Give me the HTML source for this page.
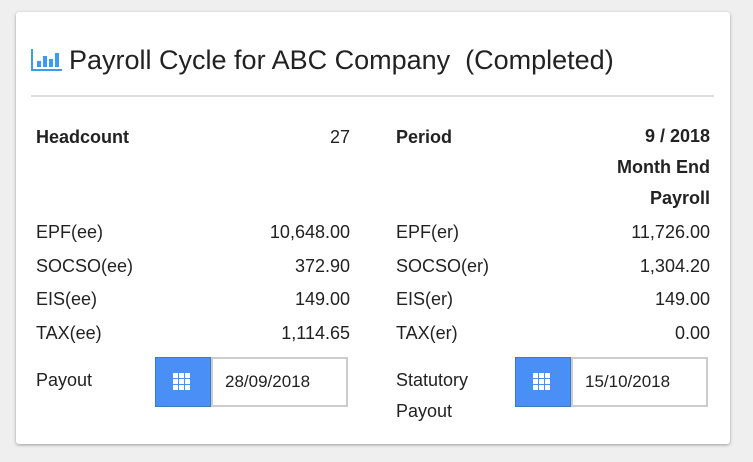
<!DOCTYPE html><html><head><style>
body{margin:0;width:753px;height:462px;background:#efefef;font-family:"Liberation Sans",Arial,sans-serif;color:#222;position:relative;overflow:hidden}
.card{position:absolute;left:16px;top:12px;width:714px;height:432px;background:#fff;border-radius:3px;box-shadow:0 1px 3px rgba(0,0,0,.35)}
.t{position:absolute;white-space:nowrap;font-size:18px;line-height:20px}
.r{text-align:right}
.b{font-weight:bold}
.btn{position:absolute;width:54px;height:48px;background:#4a8ff5;border:1px solid #3a7cc0}
.inp{position:absolute;width:121px;height:46px;border:2px solid #ccc;font-size:17px;line-height:46px;padding-left:12px;box-sizing:content-box}
</style></head><body>
<div class="card"></div>
<svg style="position:absolute;left:31px;top:49px" width="31" height="23"><g fill="#3a9bf0"><rect x="0" y="0" width="2" height="22"/><rect x="0" y="20" width="31" height="2"/><rect x="6" y="12" width="4" height="6"/><rect x="12" y="7" width="4" height="11"/><rect x="18" y="10" width="4" height="8"/><rect x="24" y="4" width="4" height="14"/></g></svg>
<div class="t" style="left:69px;top:45px;font-size:27px;line-height:30px;color:#222">Payroll Cycle for ABC Company&nbsp; (Completed)</div>
<div style="position:absolute;left:31px;top:95px;width:683px;height:2px;background:#ddd"></div>
<div class="t b" style="left:36px;top:127px">Headcount</div>
<div class="t r" style="right:403px;top:127px">27</div>
<div class="t b" style="left:396px;top:127px">Period</div>
<div class="t b r" style="right:43px;top:121px;line-height:31px">9 / 2018<br>Month End<br>Payroll</div>
<div class="t" style="left:36px;top:216px;line-height:33.5px">EPF(ee)<br>SOCSO(ee)<br>EIS(ee)<br>TAX(ee)</div>
<div class="t r" style="right:403px;top:216px;line-height:33.5px">10,648.00<br>372.90<br>149.00<br>1,114.65</div>
<div class="t" style="left:396px;top:216px;line-height:33.5px">EPF(er)<br>SOCSO(er)<br>EIS(er)<br>TAX(er)</div>
<div class="t r" style="right:43px;top:216px;line-height:33.5px">11,726.00<br>1,304.20<br>149.00<br>0.00</div>
<div class="t" style="left:36px;top:370px">Payout</div>
<div class="t" style="left:396px;top:365px;line-height:31px">Statutory<br>Payout</div>
<div class="btn" style="left:155px;top:357px"></div>
<div class="btn" style="left:515px;top:357px"></div>
<svg style="position:absolute;left:173px;top:373px" width="18" height="18"><g fill="#fff"><rect x="0" y="0" width="5" height="5"/><rect x="6" y="0" width="5" height="5"/><rect x="12" y="0" width="5" height="5"/><rect x="0" y="6" width="5" height="5"/><rect x="6" y="6" width="5" height="5"/><rect x="12" y="6" width="5" height="5"/><rect x="0" y="12" width="5" height="5"/><rect x="6" y="12" width="5" height="5"/><rect x="12" y="12" width="5" height="5"/></g></svg>
<svg style="position:absolute;left:533px;top:373px" width="18" height="18"><g fill="#fff"><rect x="0" y="0" width="5" height="5"/><rect x="6" y="0" width="5" height="5"/><rect x="12" y="0" width="5" height="5"/><rect x="0" y="6" width="5" height="5"/><rect x="6" y="6" width="5" height="5"/><rect x="12" y="6" width="5" height="5"/><rect x="0" y="12" width="5" height="5"/><rect x="6" y="12" width="5" height="5"/><rect x="12" y="12" width="5" height="5"/></g></svg>
<div class="inp" style="left:211px;top:357px">28/09/2018</div>
<div class="inp" style="left:571px;top:357px">15/10/2018</div>
</body></html>
